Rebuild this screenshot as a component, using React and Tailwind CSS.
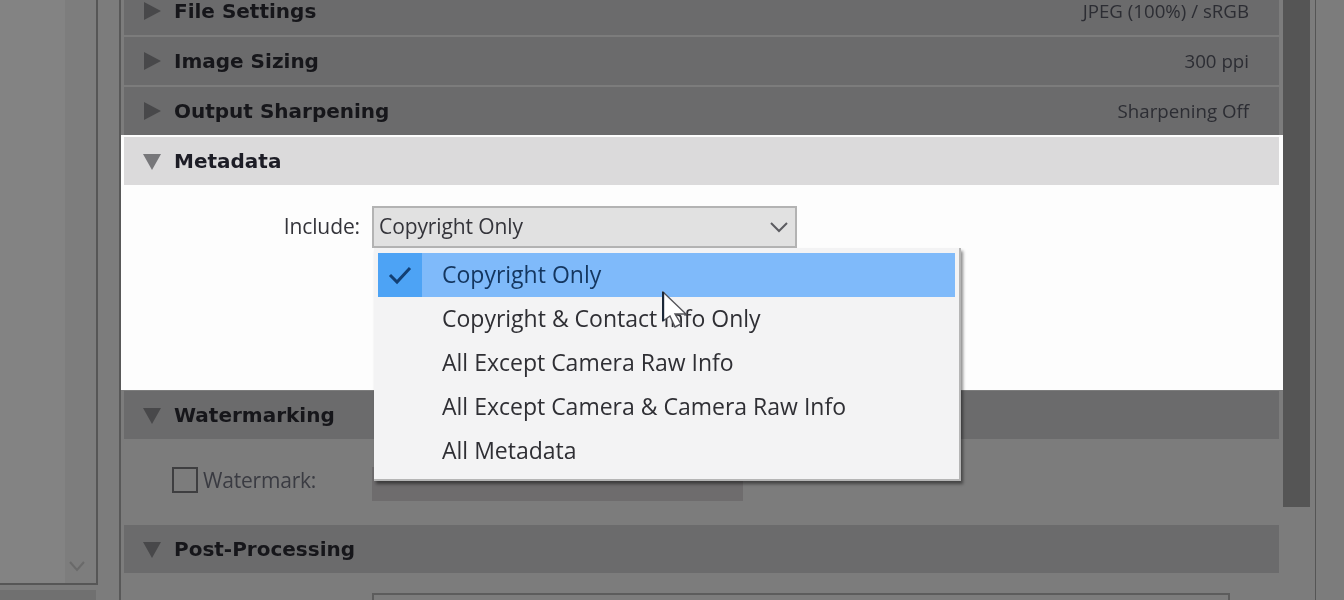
import React from 'react';

const sans = 'font-["Open_Sans",sans-serif]';

function Arrow({ open, className }) {
  return (
    <svg className={className} width="20" height="20" viewBox="0 0 20 20">
      {open ? <polygon points="1,3 19,3 10,19" fill="currentColor" /> : <polygon points="2,1 2,19 19,10" fill="currentColor" />}
    </svg>
  );
}

function Header({ title, value, open, light }) {
  return (
    <div className={`flex h-[48px] shrink-0 items-center pl-[18px] pr-[30px] ${light ? 'bg-[#dbdadb]' : 'bg-[#6b6b6c]'}`}>
      <Arrow open={open} className={light ? 'text-[#77777a]' : 'text-[#48484a]'} />
      <span className={`ml-[12px] font-["DejaVu_Sans",sans-serif] text-[20px] font-bold ${light ? 'text-[#1d1d26]' : 'text-[#16161a]'}`}>{title}</span>
      {value && <span className="ml-auto text-[18.7px] text-[#2c2d33]">{value}</span>}
    </div>
  );
}

const menuItems = ['Copyright & Contact Info Only', 'All Except Camera Raw Info', 'All Except Camera & Camera Raw Info', 'All Metadata'];

export default function App() {
  return (
    <div className={`${sans} relative flex h-[600px] w-[1344px] overflow-hidden bg-[#7c7c7c] blur-[0.4px]`}>
      {/* left panel */}
      <div className="flex w-[98px] shrink-0 flex-col">
        <div className="relative flex h-[585px] border-r-2 border-b-2 border-[#565656]">
          <div className="w-[65px] bg-[#838383]" />
          <div className="flex flex-1 items-end justify-center bg-[#7d7d7d] pr-[7px] pb-[11px]">
            <svg width="18" height="12" viewBox="0 0 18 12" fill="none" stroke="#6a6a6a" strokeWidth="2"><path d="M2 2l7 8 7-8" /></svg>
          </div>
        </div>
        <div className="mt-[5px] mr-[2px] flex-1 bg-[#707070]" />
      </div>
      <div className="w-[21px] shrink-0" />

      {/* main panel */}
      <div className="flex w-[1164px] shrink-0 flex-col border-l-2 border-[#585858]">
        <div className="-mt-[13px] flex flex-col gap-[2px] pr-[4px] pl-[3px]">
          <Header title="File Settings" value="JPEG (100%) / sRGB" />
          <Header title="Image Sizing" value="300 ppi" />
          <Header title="Output Sharpening" value="Sharpening Off" />
        </div>

        <div className="h-[255px] shrink-0 bg-[#fdfdfd] pt-[2px]">
          <div className="pr-[4px] pl-[3px]">
            <Header title="Metadata" open light />
          </div>
          <div className="mt-[21px] flex items-center">
            <span className="w-[239px] text-right text-[21px] tracking-[-0.1px] text-[#34343a]">Include:</span>
            <div className="ml-[12px] flex h-[42px] w-[425px] items-center justify-between border-2 border-[#b3b3b3] bg-[#e1e1e1] pr-[6px] pl-[5px]">
              <span className="text-[21px] tracking-[-0.1px] text-[#34343a]">Copyright Only</span>
              <svg width="20" height="12" viewBox="0 0 20 12" fill="none" stroke="#5b5b60" strokeWidth="2"><path d="M2 2l8 8 8-8" /></svg>
            </div>
          </div>
        </div>

        <div className="mt-[1px] pr-[4px] pl-[3px]">
          <Header title="Watermarking" open />
          <div className="flex h-[86px] items-start pt-[28px] pl-[48px]">
            <div className="h-[26px] w-[26px] shrink-0 border-2 border-[#3e3e40]" />
            <span className="ml-[5px] w-[169px] text-[21px] leading-[26px] tracking-[-0.2px] text-[#3a3b42]">Watermark:</span>
            <div className="h-[34px] w-[371px] bg-[#6e6c6d]" />
          </div>
          <Header title="Post-Processing" open />
          <div className="mt-[20px] ml-[248px] h-[40px] w-[858px] border-2 border-[#5c5c5c]" />
        </div>
      </div>

      {/* scrollbar */}
      <div className="h-[507px] w-[27px] shrink-0 bg-[#555555]" />
      <div className="w-[5px] shrink-0" />
      <div className="w-[1px] shrink-0 bg-[#555555]" />

      {/* open menu */}
      <div className="absolute top-[248px] left-[374px] z-10 h-[233px] w-[587px] border-r-2 border-b-2 border-[#b5b5b5] bg-[#f3f3f4] px-[4px] pt-[5px] shadow-[2px_3px_3px_rgba(0,0,0,0.45)]">
        <div className="flex h-[44px] w-[577px] items-center bg-[#7fbafa] pb-[2px]">
          <div className="-mb-[2px] flex h-[44px] w-[44px] items-center justify-center bg-[#4da3f5]">
            <svg width="24" height="20" viewBox="0 0 24 20" fill="none" stroke="#123f73" strokeWidth="3"><path d="M2 10l7 7L22 3" /></svg>
          </div>
          <span className="ml-[20px] text-[23px] text-[#14365f]">Copyright Only</span>
        </div>
        {menuItems.map(item => (
          <div key={item} className="flex h-[44px] items-center pb-[2px] pl-[64px] text-[23px] text-[#2f2f34]">{item}</div>
        ))}
      </div>

      {/* cursor */}
      <svg className="absolute top-[291px] left-[662px] z-20" width="30" height="42" viewBox="0 0 30 42">
        <polygon points="1,1 1,30 8,25 13,36 19,33 13,23 24,23" fill="#ffffff" stroke="#55555a" strokeWidth="1.4" />
        <path d="M1 1v29" stroke="#1c2838" strokeWidth="2.4" />
      </svg>
    </div>
  );
}
